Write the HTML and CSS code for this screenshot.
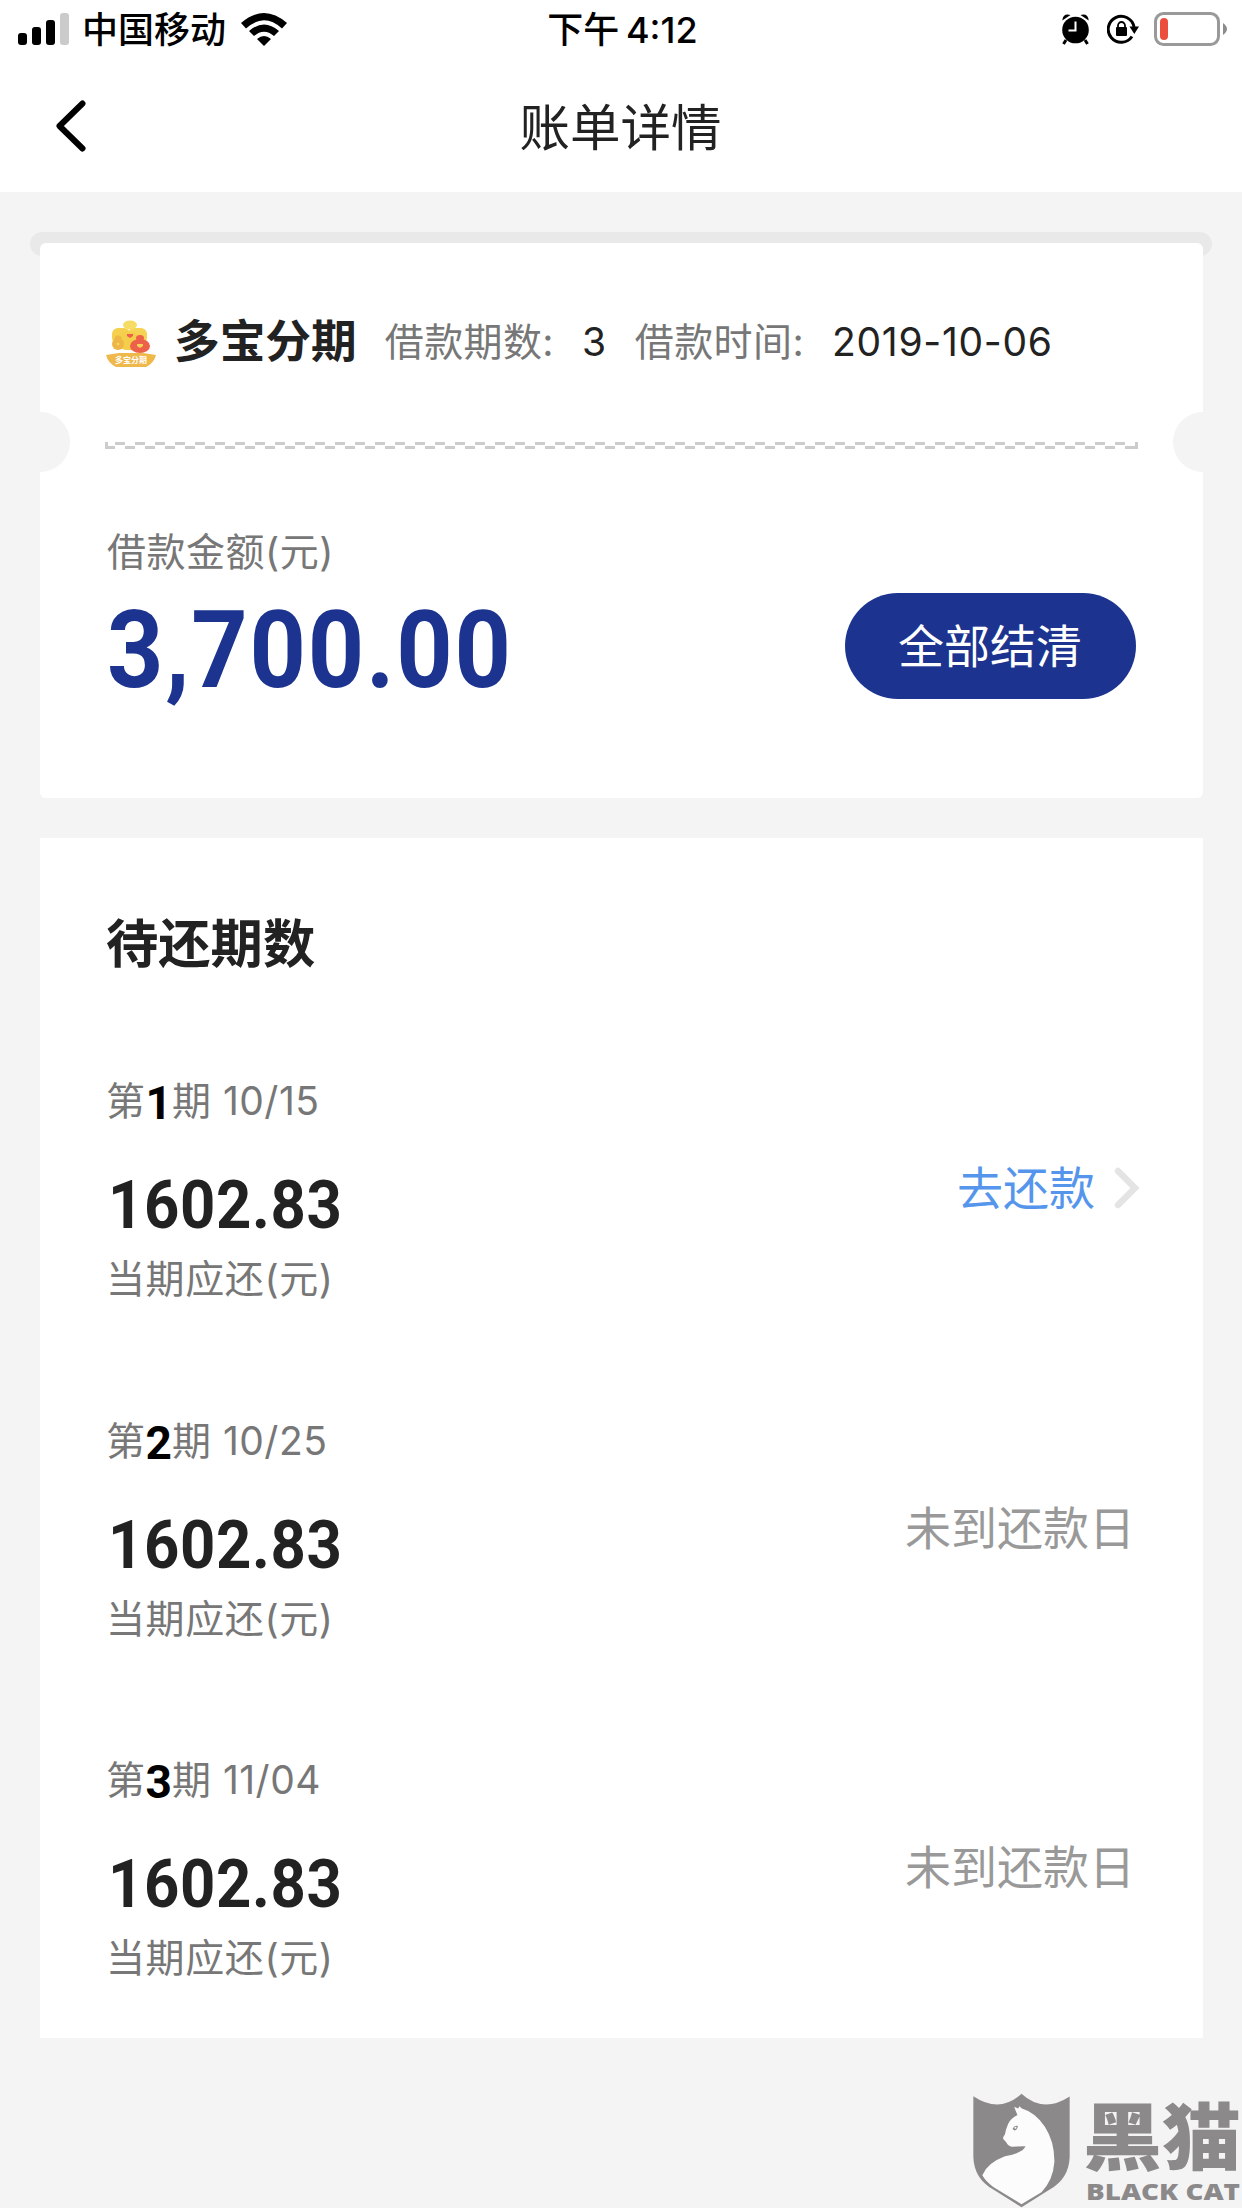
FILE: index.html
```html
<!DOCTYPE html>
<html lang="zh-CN">
<head>
    <meta charset="UTF-8">
    <meta name="viewport" content="width=device-width, initial-scale=1.0">
    <title>账单详情</title>
    <link rel="stylesheet" href="styles.css">
</head>
<body>
    <div class="status-bar">
        <div class="status-left">
            <svg class="signal" width="51" height="32" viewBox="0 0 51 32">
                <rect x="0" y="20" width="9" height="12" rx="3"/>
                <rect x="14" y="14" width="9" height="18" rx="3"/>
                <rect x="28" y="7" width="9" height="25" rx="3"/>
                <rect x="42" y="0" width="9" height="32" rx="3" fill="#cbcbcb"/>
            </svg>
            <span class="carrier">中国移动</span>
            <svg class="wifi" width="46" height="33" viewBox="0 0 46 33">
                <path d="M0 10 Q23 -10 46 10 L41 15.5 Q23 -1 5 15.5Z"/>
                <path d="M8 18 Q23 5 38 18 L33 23 Q23 14.5 13 23Z"/>
                <path d="M16 26 Q23 20 30 26 L23 33Z"/>
            </svg>
        </div>
        <div class="status-time">下午 4:12</div>
        <div class="status-right">
            <svg class="alarm" width="27" height="31" viewBox="0 0 27 31">
                <circle cx="13.5" cy="16" r="13.3"/>
                <path d="M0.3 6.5 Q1 -1 8.5 1Z M18.5 1 Q26 -1 26.7 6.5Z"/>
                <path d="M4 26 L1.5 30 M23 26 L25.5 30" stroke="#000" stroke-width="3"/>
                <path d="M13.5 7.5 V16.5 H6.5" stroke="#fff" stroke-width="2" fill="none"/>
            </svg>
            <svg class="lock" width="32" height="31" viewBox="0 0 32 31">
                <path d="M25 22.5 A13 13 0 1 1 27 13" stroke="#000" stroke-width="3" fill="none"/>
                <path d="M22.5 12.5 H32 L27.3 20Z"/>
                <rect x="9" y="13" width="11" height="9" rx="1"/>
                <path d="M11 14 V11.5 A3.5 3.5 0 0 1 18 11.5 V14" stroke="#000" stroke-width="1.8" fill="none"/>
            </svg>
            <svg class="battery" width="73" height="34" viewBox="0 0 73 34">
                <rect x="1.5" y="1.5" width="63" height="31" rx="8" fill="none" stroke="#999" stroke-width="3"/>
                <rect x="6" y="6" width="8" height="22" rx="4" fill="#eb4e3d"/>
                <path d="M69 11 Q73 14 73 17 Q73 20 69 23Z" fill="#8c8c8c"/>
            </svg>
        </div>
    </div>

    <div class="nav">
        <svg class="back" width="30" height="52" viewBox="0 0 30 52">
            <path d="M26.5 3.5 L3.5 26 L26.5 48.5" fill="none" stroke="#000" stroke-width="6" stroke-linecap="round" stroke-linejoin="round"/>
        </svg>
        <h1>账单详情</h1>
    </div>

    <div class="content">
        <div class="slot"></div>
        <div class="card summary">
            <div class="loan-head">
                <svg class="product-icon" width="50" height="47" viewBox="0 0 50 47">
                    <rect x="6" y="8" width="18" height="16" rx="6" fill="#f5d04f"/>
                    <rect x="22" y="8" width="19" height="16" rx="6" fill="#f6d355"/>
                    <rect x="14" y="12" width="18" height="18" rx="6" fill="#f4cd4a"/>
                    <ellipse cx="24" cy="5" rx="7" ry="4.5" fill="#f6dc62"/>
                    <circle cx="12" cy="24" r="6" fill="#edb646"/>
                    <circle cx="12" cy="19" r="3.5" fill="#edb646"/>
                    <circle cx="12" cy="24" r="1.3" fill="#f7d96b"/>
                    <path d="M21 14 H27 V16 L24 18 L21 16Z" fill="#ed6049"/>
                    <ellipse cx="34" cy="26" rx="10" ry="7" fill="#ed6049"/>
                    <ellipse cx="34" cy="18" rx="4" ry="3" fill="#ed6049"/>
                    <path d="M31 24 H37 V26 L34 28 L31 26Z" fill="#f6d355"/>
                    <path d="M0 35 L13 33 H37 L50 35 Q48 43 40 47 H10 Q2 43 0 35Z" fill="#efb84b"/>
                    <text x="25" y="43" class="icon-text">多宝分期</text>
                </svg>
                <span class="product">多宝分期</span>
                <span class="label term-label">借款期数:</span>
                <span class="value">3</span>
                <span class="label date-label">借款时间:</span>
                <span class="value">2019-10-06</span>
            </div>
            <div class="divider"></div>
            <div class="amount-row">
                <div>
                    <div class="label amount-label">借款金额(元)</div>
                    <div class="amount">3,700.00</div>
                </div>
                <button class="settle-btn">全部结清</button>
            </div>
        </div>

        <div class="card periods">
            <h2>待还期数</h2>
            <div class="period">
                <div>
                    <div class="period-head">第<b>1</b>期 10/15</div>
                    <div class="period-amount">1602.83</div>
                    <div class="period-label">当期应还(元)</div>
                </div>
                <a class="pay"><span>去还款</span>
                    <svg width="26" height="42" viewBox="0 0 26 42">
                        <path d="M4 4 L21 21 L4 38" fill="none" stroke="#e4e4e4" stroke-width="6.5" stroke-linecap="round"/>
                    </svg>
                </a>
            </div>
            <div class="period">
                <div>
                    <div class="period-head">第<b>2</b>期 10/25</div>
                    <div class="period-amount">1602.83</div>
                    <div class="period-label">当期应还(元)</div>
                </div>
                <span class="pending">未到还款日</span>
            </div>
            <div class="period">
                <div>
                    <div class="period-head">第<b>3</b>期 11/04</div>
                    <div class="period-amount">1602.83</div>
                    <div class="period-label">当期应还(元)</div>
                </div>
                <span class="pending">未到还款日</span>
            </div>
        </div>
    </div>

    <div class="watermark">
        <svg width="97" height="115" viewBox="39 98 292 345">
            <path fill="#8c898a" d="M40 107 Q120 160 185 100 Q250 160 330 108 V290 Q328 355 270 388 L185 441 L100 388 Q42 355 40 290Z"/>
            <path fill="#fcfcfc" d="M163 139 L175 144 L179 137 L186 144 Q225 155 255 198 Q285 245 284 305 Q280 360 245 396 L185 432 L100 380 Q76 362 67 345 Q82 308 135 288 Q190 278 197 258 L155 259 Q143 256 139 246 L130 236 Q128 230 135 222 Q137 208 145 190 Q153 174 173 164 Q169 156 163 139Z"/>
            <path fill="#8c898a" d="M158 206 Q164 193 174 197 Q174 209 164 210Z"/>
            <circle cx="167" cy="202" r="3" fill="#fcfcfc"/>
        </svg>
        <svg class="brand" width="154" height="115" viewBox="0 0 154 115">
            <text x="-4" y="71" class="brand-cn" textLength="158" lengthAdjust="spacingAndGlyphs">黑猫</text>
            <text x="-1" y="107" class="brand-en" textLength="154" lengthAdjust="spacingAndGlyphs">BLACK CAT</text>
        </svg>
    </div>
</body>
</html>
```

FILE: styles.css
```css
* {
    box-sizing: border-box;
}
body {
    margin: 0;
    height: 2208px;
    background-color: #f4f4f4;
    font-family: Inter, "Noto Sans CJK SC", sans-serif;
    color: #222;
    position: relative;
    overflow: hidden;
}
svg {
    display: block;
    flex-shrink: 0;
}
.status-bar {
    display: grid;
    grid-template-columns: 1fr auto 1fr;
    align-items: center;
    height: 58px;
    padding: 0 15px 0 18px;
    background: #fff;
    color: #000;
    font-size: 36px;
    font-weight: 500;
    line-height: 58px;
}
.status-left {
    display: flex;
    align-items: center;
}
.carrier {
    margin: 0 15px 0 13px;
    padding-top: 2px;
    line-height: 56px;
}
.status-time {
    padding-top: 2px;
    line-height: 56px;
    word-spacing: -3px;
}
.status-right {
    display: flex;
    align-items: center;
    justify-content: flex-end;
}
.lock {
    margin: 0 15px 0 18px;
}
.nav {
    display: grid;
    grid-template-columns: 1fr auto 1fr;
    align-items: center;
    height: 134px;
    padding: 2px 57px 0 56px;
    background: #fff;
}
.nav h1 {
    margin: 0;
    padding-top: 3px;
    font-size: 50.5px;
    font-weight: 400;
    line-height: 60px;
}
.content {
    padding: 40px 39px 0 40px;
}
.slot {
    height: 24px;
    margin: 0 -9px -13px -10px;
    border-radius: 12px;
    background: #e9e9e9;
}
.card {
    position: relative;
    background: #fff;
}
.summary {
    height: 555px;
    border-radius: 6px;
    overflow: hidden;
}
/* ticket notches */
.summary::before, .summary::after {
    content: "";
    position: absolute;
    top: 169px;
    width: 60px;
    height: 60px;
    border-radius: 50%;
    background: #f4f4f4;
}
.summary::before {
    left: -30px;
}
.summary::after {
    right: -30px;
}
.loan-head {
    display: flex;
    align-items: center;
    height: 198px;
    margin-bottom: 1px;
    padding-left: 66px;
    font-size: 39px;
    line-height: 60px;
    white-space: nowrap;
}
.product-icon {
    margin-top: 3px;
}
.icon-text {
    font-size: 8px;
    font-weight: 700;
    fill: #fff;
    text-anchor: middle;
}
.product {
    margin-left: 18px;
    font-size: 45.7px;
    font-weight: 700;
}
.label {
    color: #777;
    font-size: 39px;
    letter-spacing: 0.4px;
}
.value {
    letter-spacing: 0.7px;
}
.term-label, .date-label {
    margin: 0 28px;
}
.divider {
    height: 7px;
    margin: 0 65px;
    border: solid #ccc;
    border-width: 0 3px;
    background:
        repeating-linear-gradient(90deg, transparent 0 10px, #ccc 10px 20px) 0 0 / 100% 3px no-repeat border-box,
        repeating-linear-gradient(90deg, #ccc 0 10px, transparent 10px 20px) 0 100% / 100% 3px no-repeat border-box;
}
.amount-row {
    display: flex;
    justify-content: space-between;
    align-items: flex-end;
    padding: 73px 67px 0 67px;
}
.amount-label {
    line-height: 60px;
    letter-spacing: 0.5px;
}
.amount, .period-amount {
    font-family: Roboto, sans-serif;
    font-weight: 700;
    transform: scaleX(0.92);
    transform-origin: left;
}
.amount {
    margin-top: 14px;
    color: #1c348f;
    font-size: 107px;
    line-height: 110px;
    letter-spacing: 1.9px;
}
.settle-btn {
    width: 291px;
    height: 106px;
    margin-bottom: 7px;
    padding: 0 1px 6px 0;
    border: none;
    border-radius: 53px;
    background: #1c348f;
    color: #fff;
    font-family: inherit;
    font-size: 46px;
}
.periods {
    margin-top: 40px;
    padding: 76px 63px 45px 66px;
}
.periods h2 {
    margin: 0;
    font-size: 52.3px;
    font-weight: 700;
    line-height: 60px;
}
.period {
    display: flex;
    justify-content: space-between;
    align-items: center;
    height: 339.5px;
    padding-top: 88px;
}
.period-head {
    color: #777;
    font-size: 39px;
    line-height: 60px;
    letter-spacing: 0.5px;
}
.period-head b {
    color: #000;
    font-family: Roboto, sans-serif;
    font-size: 46px;
    line-height: 1;
    vertical-align: -4px;
    letter-spacing: 0;
}
.period-amount {
    margin: 39px 0 14px 2px;
    font-size: 67px;
    line-height: 70px;
    letter-spacing: 0.7px;
}
.period-label {
    color: #777;
    font-size: 39px;
    line-height: 50px;
    letter-spacing: 0.6px;
}
.pay {
    display: flex;
    align-items: center;
    gap: 19px;
    color: #5596ec;
    font-size: 46px;
}
.pay span, .pending {
    padding-bottom: 5px;
}
.pending {
    padding-right: 5px;
    color: #999;
    font-size: 46px;
}
.watermark {
    position: absolute;
    right: 1px;
    bottom: 0;
    display: flex;
    gap: 17px;
}
.brand {
    overflow: visible;
}
.brand-cn {
    font-family: "Noto Sans CJK SC", sans-serif;
    font-size: 73px;
    font-weight: 900;
    fill: #8c898a;
}
.brand-en {
    font-family: "Open Sans", sans-serif;
    font-size: 22px;
    font-weight: 800;
    fill: #8c898a;
}
```
